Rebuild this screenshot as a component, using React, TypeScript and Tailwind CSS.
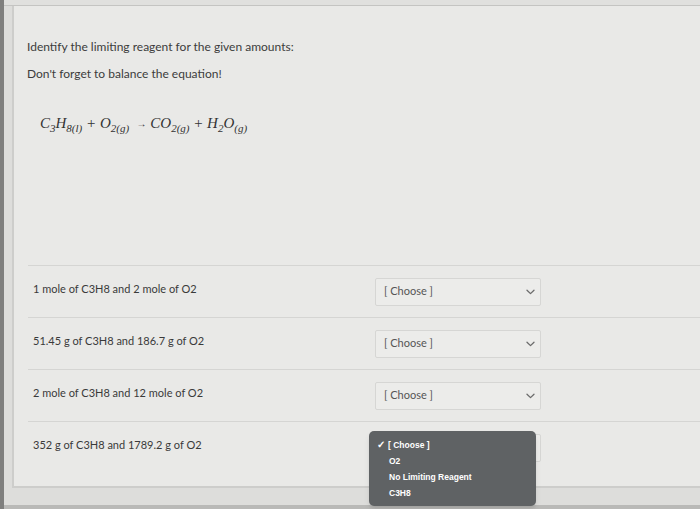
import React from "react";

const rows = [
  "1 mole of C3H8 and 2 mole of O2",
  "51.45 g of C3H8 and 186.7 g of O2",
  "2 mole of C3H8 and 12 mole of O2",
  "352 g of C3H8 and 1789.2 g of O2",
];

function Chevron() {
  return (
    <svg width="9" height="6" viewBox="0 0 9 6" fill="none">
      <path d="M1 1.2 L4.5 4.6 L8 1.2" stroke="#6b6b6b" strokeWidth="1.3" strokeLinecap="round" strokeLinejoin="round" />
    </svg>
  );
}

function Sub({ children }: { children: React.ReactNode }) {
  return <span className="text-[11px] relative top-[4px]">{children}</span>;
}

export default function App() {
  return (
    <div className="w-[700px] h-[509px] flex bg-[#dcdcda] overflow-hidden" style={{ fontFamily: "Lato, 'Liberation Sans', sans-serif" }}>
      <div className="w-[4px] bg-[#7f7f7e]" />
      <div className="flex-1 flex flex-col">
        <div className="h-[6px] bg-[#e0e0de] border-b border-[#c4c4c2]" />
        <div className="flex-1 pl-[8px] pb-[17px] bg-[#dddddb] flex flex-col">
          <div className="flex-1 bg-[#e9e9e7] border-l-2 border-b-2 border-[#cdcdcb] flex flex-col">
            <div className="pl-[13px] pt-[33px] text-[12px] text-[#3c3c3c]">
              <div className="h-[16px] leading-[16px]">Identify the limiting reagent for the given amounts:</div>
              <div className="h-[16px] leading-[16px] mt-[11px]">Don&apos;t forget to balance the equation!</div>
              <div
                className="mt-[31px] pl-[13px] h-[20px] leading-[20px] text-[15px] italic text-[#333] whitespace-pre"
                style={{ fontFamily: "'Liberation Serif', 'DejaVu Serif', serif" }}
              >
                C<Sub>3</Sub>H<Sub>8(l)</Sub>{" + "}O<Sub>2(g)</Sub>{"  "}<span className="not-italic text-[10px] relative top-[-1px]">→</span>{" "}CO<Sub>2(g)</Sub>{" + "}H<Sub>2</Sub>O<Sub>(g)</Sub>
              </div>
            </div>
            <div className="mt-[132px] ml-[14px] flex flex-col">
              {rows.map((r, i) => (
                <div key={i} className="h-[52px] border-t border-[#d5d5d3] flex items-center">
                  <div className="w-[347px] pl-[5px] pb-[5px] text-[11px] text-[#3a3a3a]">{r}</div>
                  <div className="relative">
                    <div className="w-[166px] h-[28px] border border-[#d6d6d4] bg-[#ececea] rounded-[2px] flex items-center justify-between pl-[8px] pr-[5px] text-[11px] text-[#555]">
                      <span className={i === 3 ? "invisible" : ""}>[ Choose ]</span>
                      <Chevron />
                    </div>
                    {i === 3 && (
                      <div
                        className="absolute left-[-6px] top-[-3px] w-[167px] h-[75px] rounded-[5px] bg-[#5f6264] pt-[6px] pl-[8px] text-white text-[8.5px] font-bold shadow-md"
                        style={{ fontFamily: "'Liberation Sans', Arial, sans-serif" }}
                      >
                        <div className="h-[16px] leading-[16px] flex items-center">
                          <span className="w-[11px] text-[10px]">✓</span>
                          <span>[ Choose ]</span>
                        </div>
                        <div className="h-[16px] leading-[16px] pl-[12px]">O2</div>
                        <div className="h-[16px] leading-[16px] pl-[12px]">No Limiting Reagent</div>
                        <div className="h-[16px] leading-[16px] pl-[12px]">C3H8</div>
                      </div>
                    )}
                  </div>
                </div>
              ))}
            </div>
          </div>
        </div>
        <div className="h-[4px] bg-[#b9b9b7]" />
      </div>
    </div>
  );
}
